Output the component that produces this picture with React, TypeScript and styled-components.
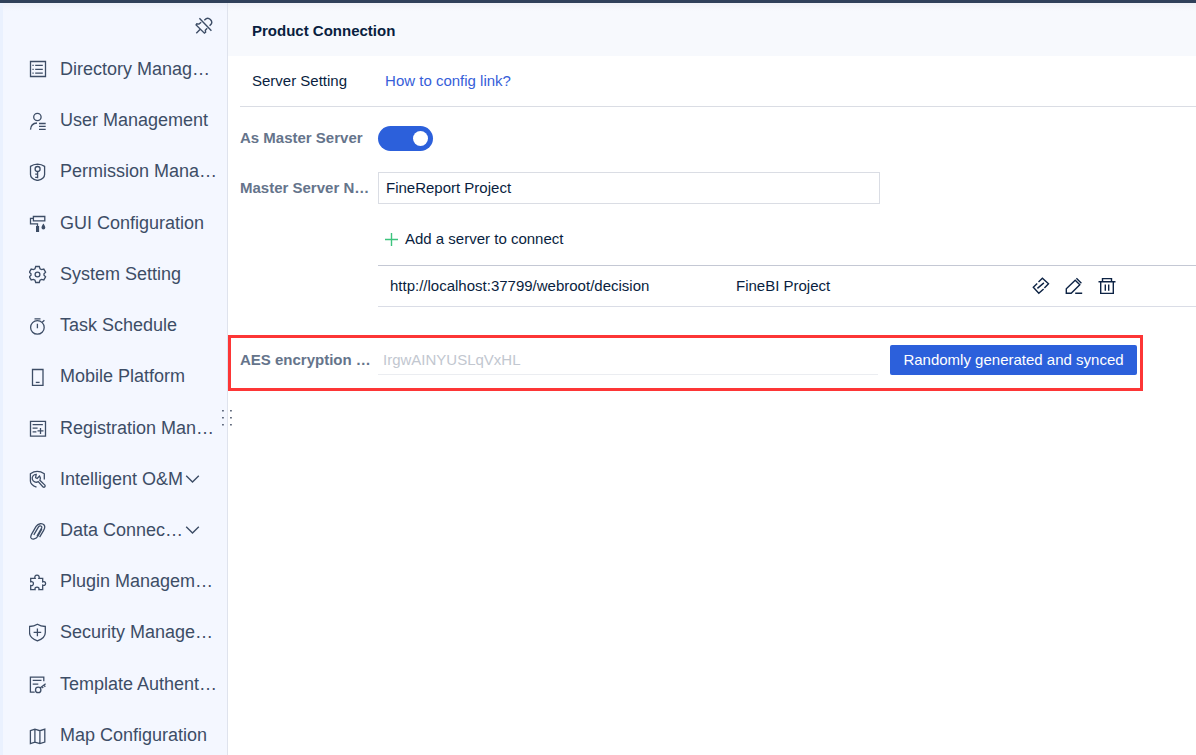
import React from "react";
import styled, { createGlobalStyle } from "styled-components";

const GlobalStyle = createGlobalStyle`
  *, *::before, *::after { box-sizing: border-box; }
  body {
    margin: 0;
    background: #ffffff;
    color: #091e40;
    font-family: "Liberation Sans", Arial, sans-serif;
    font-size: 15px;
    line-height: 20px;
  }
  button, input { font: inherit; color: inherit; }
`;

const Page = styled.div`
  display: flex;
  min-height: 100vh;
  border-top: 3px solid #2f4059;
`;

const Sidebar = styled.aside`
  position: relative;
  flex: none;
  display: flex;
  flex-direction: column;
  width: 228px;
  border-left: 3px solid #eaf1fe;
  border-right: 1px solid #dfe3ed;
  background: linear-gradient(#eceff8, #f4f7ff 8px);
`;

const SidebarTop = styled.div`
  display: flex;
  justify-content: flex-end;
  height: 54px;
  padding: 14px 14px 0 0;
`;

const IconButton = styled.button`
  display: grid;
  place-items: center;
  width: 18px;
  height: 18px;
  padding: 0;
  border: 0;
  background: none;
  color: ${(p) => p.color ?? "#0d2344"};
  cursor: pointer;
`;

const NavList = styled.nav`
  flex: 1;
  display: flex;
  flex-direction: column;
  justify-content: space-between;
  padding: 0 12px 8px 26px;
`;

const NavItem = styled.a`
  display: flex;
  align-items: center;
  height: 24px;
  color: #3d4d66;
  font-size: 18px;
  line-height: 24px;
  text-decoration: none;
  white-space: nowrap;
`;

const NavText = styled.span`
  margin-left: 13px;
`;

const Chevron = styled.svg`
  flex: none;
  width: 16px;
  height: 16px;
  margin: 0 14px 0 auto;
`;

const NavSvg = styled.svg`
  flex: none;
  width: 18px;
  height: 20px;
`;

const ResizeHandle = styled.svg`
  position: absolute;
  top: 405px;
  right: -7px;
  width: 14px;
  height: 20px;
  cursor: col-resize;
`;

const Main = styled.main`
  flex: 1;
  min-width: 0;
`;

const Header = styled.header`
  display: flex;
  align-items: center;
  height: 53px;
  padding: 3px 24px 0;
  background: linear-gradient(#eff1f6, #f7f9fd 8px);
`;

const Title = styled.h1`
  margin: 0;
  font-size: 15px;
  line-height: 20px;
`;

const SubHeader = styled.div`
  display: flex;
  align-items: center;
  gap: 38px;
  height: 51px;
  margin-left: 12px;
  padding: 0 12px;
  border-bottom: 1px solid #dadde4;
`;

const SubTitle = styled.h2`
  margin: 0;
  font-size: 15px;
  font-weight: 400;
  line-height: 20px;
`;

const HelpLink = styled.a`
  color: #365ed9;
  text-decoration: none;
`;

const Form = styled.form`
  padding-top: 15px;
`;

const Field = styled.div`
  display: flex;
  align-items: center;
  min-height: 32px;
  margin-bottom: 18px;
  padding-left: 12px;
`;

const FieldLabel = styled.label`
  flex: none;
  width: 138px;
  color: #65748b;
  font-weight: 700;
  white-space: nowrap;
`;

const Toggle = styled.input`
  appearance: none;
  display: flex;
  align-items: center;
  justify-content: flex-end;
  width: 55px;
  height: 25px;
  margin: 0;
  padding: 0 5px;
  border-radius: 13px;
  background: #2c60db;
  cursor: pointer;
  &::before {
    content: "";
    width: 15px;
    height: 15px;
    border-radius: 50%;
    background: #ffffff;
  }
  &:not(:checked) {
    justify-content: flex-start;
    background: #c3c9d4;
  }
`;

const NameInput = styled.input`
  width: 502px;
  height: 32px;
  padding: 0 7px 2px;
  border: 1px solid #dadde4;
  background: #ffffff;
  outline: 0;
`;

const Servers = styled.section`
  margin-left: 150px;
`;

const AddButton = styled.button`
  display: flex;
  align-items: center;
  gap: 7px;
  height: 34px;
  margin-bottom: 9px;
  padding: 0 7px;
  border: 0;
  background: none;
  cursor: pointer;
`;

const ServerTable = styled.table`
  width: 100%;
  table-layout: fixed;
  border-collapse: collapse;
  border-top: 1px solid #c4c8d4;
  border-bottom: 1px solid #dadde6;
`;

const Cell = styled.td<{ $width?: number }>`
  width: ${(p) => (p.$width ? `${p.$width}px` : "auto")};
  height: 41px;
  padding: 0 0 0 12px;
`;

const Actions = styled.div`
  display: flex;
  gap: 15px;
`;

const KeyRow = styled.div`
  display: flex;
  align-items: center;
  width: fit-content;
  margin-top: 28px;
  padding: 7px 3px 13px 9px;
  border: 3px solid #fd3636;
`;

const KeyInput = styled.input`
  width: 500px;
  height: 30px;
  margin-right: 12px;
  padding: 0 5px;
  border: 0;
  border-bottom: 1px solid #ebedf1;
  background: none;
  color: #c2c7d0;
  outline: 0;
`;

const PrimaryButton = styled.button`
  width: 247px;
  height: 30px;
  padding: 0;
  border: 0;
  border-radius: 2px;
  background: #2c60db;
  color: #ffffff;
  white-space: nowrap;
  cursor: pointer;
`;

const icons: Record<string, React.ReactNode> = {
  directory: (
    <>
      <path d="M1.5 2.5h15v15h-15z" />
      <path d="M6.2 6.4h7.6M6.2 10.3h7.6M6.2 14.2h7.6M3.4 6.4h1.3M3.4 10.3h1.3M3.4 14.2h1.3" />
    </>
  ),
  user: (
    <>
      <circle cx="8.4" cy="7" r="3.7" />
      <path d="M1.5 19.6C1.7 15.5 4.2 13.2 8 13M10 13.5h6.7M10 16.4h6.7M10 19.3h6.7" />
    </>
  ),
  permission: (
    <>
      <path d="M8.5 3.2C10.8 3.3 13.6 4.1 15.6 5.4V13.5C15.6 16.5 12.5 18.6 8.5 19.5C4.5 18.6 1.5 16.5 1.5 13.5V5.4C3.4 4.1 6.2 3.3 8.5 3.2z" />
      <circle cx="8.6" cy="8" r="2.5" />
      <path d="M8.6 10.5v6.8M8.6 13.2H6.2M8.6 16.3H6.2" />
    </>
  ),
  gui: (
    <>
      <path d="M4.4 3.5h11.4v4.3H4.4zM4.4 5.4H1.5v5.4h7v2.6" />
      <path d="M7 13h3.1v6H7zM14.4 10.5c1.2 2 1.9 3 1.9 4a1.9 1.9 0 0 1-3.8 0c0-1 .7-2 1.9-4z" fill="currentColor" stroke="none" />
    </>
  ),
  system: (
    <>
      <path d="M6.7 2.5h3.6l.7 2.2 1.5.9 2.3-.5 1.8 3.1-1.6 1.6v1.4l1.6 1.6-1.8 3.1-2.3-.5-1.5.9-.7 2.2H6.7L6 16.3l-1.5-.9-2.3.5-1.8-3.1L2 11.2V9.8L.4 8.2l1.8-3.1 2.3.5L6 4.7z" />
      <circle cx="8.5" cy="10.5" r="2.4" />
    </>
  ),
  task: (
    <>
      <circle cx="8.4" cy="12.4" r="6.8" />
      <path d="M5.5 3.9h6M8.4 8.7v4.5M13.2 7.3l2.2-2" />
    </>
  ),
  mobile: (
    <>
      <path d="M3.5 3.5h10.5v15.8H3.5z" />
      <path d="M6.8 16.4h3.8" />
    </>
  ),
  registration: (
    <>
      <path d="M1.5 3.4h15v14.8h-15z" />
      <path d="M3.6 6.7h10.3M3.6 10.2h5M3.6 13.8h3.8M8.5 12.9h6M11.5 9.9v6" />
    </>
  ),
  intelligent: (
    <>
      <path d="M7.5 18.2C3.8 16.8 1.4 14.8 1.4 12V4.8C5.6 1.9 10.9 1.9 15.3 4.8v5.7" />
      <path d="M7.2 5.4a3.9 3.9 0 1 0 2 7.2l4.8 5.4c1.5.8 2.8-.7 1.9-1.9l-5-4.8a3.9 3.9 0 0 0-.4-4.3L8.2 9.5 6.6 8.6z" />
    </>
  ),
  data: (
    <path d="M12.9 9l-4 7.1c-1.8 2.9-5.8 4.1-7 1.7-.6-1.4.2-2.8 1-4.2l4.2-7.2c2.2-3.4 6.4-3.2 8-1.4 1.4 1.9.4 4-.6 5.6l-3.9 6.5M4.8 14.9l4.7-8c1.2-1.9 4-.9 3.1 1.2L8 16" />
  ),
  plugin: (
    <path d="M1.7 7.3h4.4c-.9-1.7.2-3.2 1.9-3.2s2.8 1.5 1.9 3.2h3.8v3.5c1.7-.7 2.9.3 2.9 1.7s-1.2 2.4-2.9 1.7v4.5H9.9c.5-1.8-.5-2.6-1.9-2.6s-2.4.8-1.9 2.6H1.7v-4.2c1.9.4 2.7-.6 2.7-1.9s-.8-2.2-2.7-1.8z" />
  ),
  security: (
    <>
      <path d="M8.4 2.2c2.5 1.6 5 2.2 7.9 2.3v6c0 4-3.2 6.8-7.9 8.4-4.7-1.6-7.9-4.4-7.9-8.4v-6c2.9-.1 5.4-.7 7.9-2.3z" />
      <path d="M4.6 10.4h7.6M8.4 6.6v7.6" />
    </>
  ),
  template: (
    <>
      <path d="M5.7 18.2H1.4v-15h13.4v4M3.7 6.3h8.8M3.7 10.2h5.6" />
      <circle cx="9.2" cy="15.9" r="2.7" />
      <path d="M11.1 14l5.5-4.2M13 12.6l1.2 1.4M14.9 11.1l1.4 1.6" />
    </>
  ),
  map: (
    <path d="M1.4 5.7l4.5-1.5 5 1.5 4.9-1.5v12.9l-4.9 1.5-5-1.5-4.5 1.5zM5.9 4.2v12.9M10.9 5.7v12.9" />
  ),
};

const navItems = [
  { icon: "directory", text: "Directory Manag…" },
  { icon: "user", text: "User Management" },
  { icon: "permission", text: "Permission Mana…" },
  { icon: "gui", text: "GUI Configuration" },
  { icon: "system", text: "System Setting" },
  { icon: "task", text: "Task Schedule" },
  { icon: "mobile", text: "Mobile Platform" },
  { icon: "registration", text: "Registration Man…" },
  { icon: "intelligent", text: "Intelligent O&M", expandable: true },
  { icon: "data", text: "Data Connec…", expandable: true },
  { icon: "plugin", text: "Plugin Managem…" },
  { icon: "security", text: "Security Manage…" },
  { icon: "template", text: "Template Authent…" },
  { icon: "map", text: "Map Configuration" },
];

function ActionIcon({ children }: { children: React.ReactNode }) {
  return (
    <svg width="18" height="18" viewBox="0 0 18 18" fill="none" stroke="currentColor" strokeWidth="1.4" aria-hidden="true">
      {children}
    </svg>
  );
}

export default function App() {
  return (
    <>
      <GlobalStyle />
      <Page>
        <Sidebar>
          <SidebarTop>
            <IconButton type="button" aria-label="Unpin menu" color="#3d4d66">
              <ActionIcon>
                <path d="M4.4 1.2l12 12.6M6.2 5.2L4 7.1l-2.2-.3-.7 1.1 8.3 8.3 1.2-.9-.3-2.1 1.9-2M5.2 12.2L1.3 16.2M9.3 3.3l2-1.7c2.6-1.5 6.6 2.2 5.1 5.2l-1.8 1.9" />
              </ActionIcon>
            </IconButton>
          </SidebarTop>
          <NavList>
            {navItems.map((item) => (
              <NavItem key={item.icon} href="#">
                <NavSvg viewBox="0 0 18 20" fill="none" stroke="currentColor" strokeWidth="1.3" aria-hidden="true">
                  {icons[item.icon]}
                </NavSvg>
                <NavText>{item.text}</NavText>
                {item.expandable && (
                  <Chevron viewBox="0 0 16 16" fill="none" stroke="currentColor" strokeWidth="1.4" aria-hidden="true">
                    <path d="M1.2 4.7l6.3 6.3 6.3-6.3" />
                  </Chevron>
                )}
              </NavItem>
            ))}
          </NavList>
          <ResizeHandle viewBox="0 0 14 20" fill="#3d4960" aria-hidden="true">
            <path d="M2.2 2h1.5v1.5H2.2zM10.2 2h1.5v1.5h-1.5zM2.2 9h1.5v1.5H2.2zM10.2 9h1.5v1.5h-1.5zM2.2 16h1.5v1.5H2.2zM10.2 16h1.5v1.5h-1.5z" />
          </ResizeHandle>
        </Sidebar>
        <Main>
          <Header>
            <Title>Product Connection</Title>
          </Header>
          <SubHeader>
            <SubTitle>Server Setting</SubTitle>
            <HelpLink href="#">How to config link?</HelpLink>
          </SubHeader>
          <Form>
            <Field>
              <FieldLabel htmlFor="master">As Master Server</FieldLabel>
              <Toggle id="master" type="checkbox" role="switch" defaultChecked />
            </Field>
            <Field>
              <FieldLabel htmlFor="name">Master Server N…</FieldLabel>
              <NameInput id="name" type="text" defaultValue="FineReport Project" />
            </Field>
            <Servers>
              <AddButton type="button">
                <svg width="13" height="13" viewBox="0 0 13 13" stroke="#3dc47e" strokeWidth="1.4" aria-hidden="true">
                  <path d="M0 6.5h13M6.5 0v13" />
                </svg>
                Add a server to connect
              </AddButton>
              <ServerTable>
                <tbody>
                  <tr>
                    <Cell $width={346}>http://localhost:37799/webroot/decision</Cell>
                    <Cell $width={296}>FineBI Project</Cell>
                    <Cell>
                      <Actions>
                        <IconButton type="button" aria-label="Test connection">
                          <ActionIcon>
                            <path d="M6.5 5.1l3.9-3.8 6.1 5.5-4.1 4.3M5.2 6.4L1.3 10.3l5.5 6 4.8-4.3M5.4 11.4l6.5-5.5" />
                          </ActionIcon>
                        </IconButton>
                        <IconButton type="button" aria-label="Edit server">
                          <ActionIcon>
                            <path d="M1.3 16.3v-4.5l8.9-8.5 4.6 4.5-8.6 8.5zM11.4 1.3l5 5M10.2 16.3h7" />
                          </ActionIcon>
                        </IconButton>
                        <IconButton type="button" aria-label="Delete server">
                          <ActionIcon>
                            <path d="M.5 4.7h17M4.5 4.4V1.6h9v2.8M2.7 4.7v11.7h12.6V4.7M7.3 7.5v6.3M10.7 7.5v6.3" />
                          </ActionIcon>
                        </IconButton>
                      </Actions>
                    </Cell>
                  </tr>
                </tbody>
              </ServerTable>
            </Servers>
            <KeyRow>
              <FieldLabel htmlFor="key">AES encryption …</FieldLabel>
              <KeyInput id="key" type="text" readOnly value="IrgwAINYUSLqVxHL" />
              <PrimaryButton type="button">Randomly generated and synced</PrimaryButton>
            </KeyRow>
          </Form>
        </Main>
      </Page>
    </>
  );
}
